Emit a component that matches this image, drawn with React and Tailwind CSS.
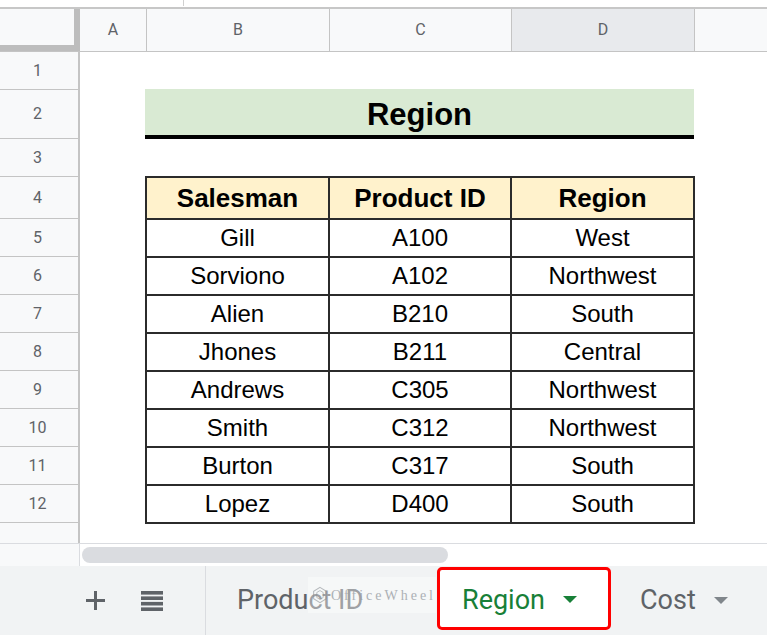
import React from "react";

const rows = [
  ["Gill", "A100", "West"],
  ["Sorviono", "A102", "Northwest"],
  ["Alien", "B210", "South"],
  ["Jhones", "B211", "Central"],
  ["Andrews", "C305", "Northwest"],
  ["Smith", "C312", "Northwest"],
  ["Burton", "C317", "South"],
  ["Lopez", "D400", "South"],
];

const rowHeaders = [
  ["1", "h-[38px]"],
  ["2", "h-[49px]"],
  ["3", "h-[38px]"],
  ["4", "h-[42px]"],
  ["5", "h-[38px]"],
  ["6", "h-[38px]"],
  ["7", "h-[38px]"],
  ["8", "h-[38px]"],
  ["9", "h-[38px]"],
  ["10", "h-[38px]"],
  ["11", "h-[38px]"],
  ["12", "h-[38px]"],
];

function Caret({ color }) {
  return (
    <svg width="14" height="8" viewBox="0 0 14 8" className="shrink-0">
      <path d="M0 0 L14 0 L7 7 Z" fill={color} />
    </svg>
  );
}

export default function App() {
  return (
    <div className="w-[767px] h-[635px] overflow-hidden bg-white flex flex-col font-['Roboto',sans-serif] relative">
      {/* top strip */}
      <div className="h-[9px] border-b-2 border-[#c7c7c7] relative shrink-0">
        <div className="absolute left-[183px] top-0 h-[6px] w-px bg-[#d0d0d0]" />
      </div>

      {/* column header */}
      <div className="h-[43px] shrink-0 flex border-b border-[#c4c4c4] bg-[#f8f9fa] text-[16px] text-[#5f6368]">
        <div className="w-[80px] h-full border-r-[6px] border-b-[6px] border-[#bdbdbd] box-border" />
        <div className="w-[67px] flex items-center justify-center border-r border-[#c4c4c4]">A</div>
        <div className="w-[183px] flex items-center justify-center border-r border-[#c4c4c4]">B</div>
        <div className="w-[182px] flex items-center justify-center border-r border-[#c4c4c4]">C</div>
        <div className="w-[183px] flex items-center justify-center border-r border-[#c4c4c4] bg-[#e8eaed]">D</div>
        <div className="flex-1" />
      </div>

      {/* body */}
      <div className="flex-1 flex min-h-0">
        <div className="w-[80px] shrink-0 flex flex-col bg-[#f8f9fa] border-r-2 border-[#c4c4c4] text-[16px] text-[#5f6368]">
          {rowHeaders.map(([n, h]) => (
            <div key={n} className={`${h} shrink-0 flex items-center justify-center pr-[3px] border-b border-[#c4c4c4]`}>
              {n}
            </div>
          ))}
          <div className="flex-1" />
        </div>

        <div className="flex-1 flex flex-col pl-[65px] pt-[37px] font-['Liberation_Sans',Arial,sans-serif] text-black">
          <div className="w-[549px] h-[50px] bg-[#d9ead3] border-b-4 border-black flex items-center justify-center pt-[6px] text-[31px] font-bold">
            Region
          </div>
          <div className="mt-[37px] w-[550px] border-l-2 border-t-2 border-[#2b2b2b] grid grid-cols-[183px_182px_183px]">
            {["Salesman", "Product ID", "Region"].map((h) => (
              <div key={h} className="h-[42px] bg-[#fff2cc] border-r-2 border-b-2 border-[#2b2b2b] flex items-center justify-center text-[26px] font-bold">
                {h}
              </div>
            ))}
            {rows.map((r, i) =>
              r.map((c, j) => (
                <div key={`${i}-${j}`} className="h-[38px] border-r-2 border-b-2 border-[#2b2b2b] flex items-center justify-center text-[24px]">
                  {c}
                </div>
              ))
            )}
          </div>
        </div>
      </div>

      {/* scrollbar row */}
      <div className="h-[23px] shrink-0 flex border-t border-[#dadce0]">
        <div className="w-[80px] bg-[#f8f9fa] border-r border-[#dadce0]" />
        <div className="flex-1 flex items-center pl-[2px]">
          <div className="w-[366px] h-[16px] rounded-full bg-[#dadce0]" />
        </div>
      </div>

      {/* tab bar */}
      <div className="h-[69px] shrink-0 bg-[#f1f3f4] flex items-center relative">
        <div className="w-[206px] h-full border-r border-[#dadce0] flex items-center pl-[86px] gap-[36px]">
          <svg width="19" height="19" viewBox="0 0 19 19">
            <rect x="8" y="0" width="3" height="19" fill="#5f6368" />
            <rect x="0" y="8" width="19" height="3" fill="#5f6368" />
          </svg>
          <svg width="22" height="20" viewBox="0 0 22 20">
            <rect x="0" y="0" width="22" height="3.6" fill="#5f6368" />
            <rect x="0" y="5.4" width="22" height="3.6" fill="#5f6368" />
            <rect x="0" y="10.9" width="22" height="3.6" fill="#5f6368" />
            <rect x="0" y="16.4" width="22" height="3.6" fill="#5f6368" />
          </svg>
        </div>
        <div className="w-[231px] h-full flex items-center pl-[31px] text-[27px] text-[#5f6368]">
          Product ID
        </div>
        <div className="w-[174px] h-[63px] self-start mt-[1px] bg-white border-[3px] border-[#ff0000] rounded-[5px] flex items-center pl-[22px] pt-[3px] gap-[18px] text-[27px] text-[#188038]">
          <span>Region</span>
          <Caret color="#188038" />
        </div>
        <div className="flex items-center pl-[29px] gap-[18px] text-[27px] text-[#5f6368]">
          <span>Cost</span>
          <Caret color="#80868b" />
        </div>

        {/* watermark */}
        <div className="absolute left-[308px] top-[11px] w-[128px] h-[36px] bg-white/40 flex items-center gap-[4px] pl-[5px]">
          <svg width="22" height="26" viewBox="0 0 22 26" className="opacity-60">
            <path d="M11 1 L21 7 L21 19 L11 25 L1 19 L1 7 Z" fill="none" stroke="#8a8f95" strokeWidth="1.6" />
            <path d="M11 6 L16 9 L16 17 L11 20 L6 17 L6 9 Z" fill="none" stroke="#8a8f95" strokeWidth="1.4" />
          </svg>
          <span className="font-['Liberation_Serif',serif] text-[14px] tracking-[3px] text-[#9aa0a6] opacity-80">OfficeWheel</span>
        </div>
      </div>
    </div>
  );
}
